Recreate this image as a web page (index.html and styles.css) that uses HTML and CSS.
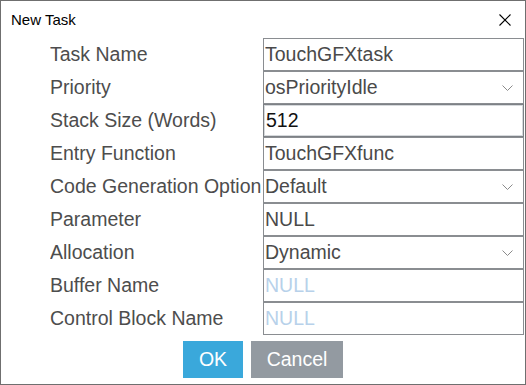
FILE: index.html
```html
<!DOCTYPE html>
<html lang="en">
<head>
    <meta charset="UTF-8">
    <title>New Task</title>
    <link rel="stylesheet" href="styles.css">
</head>
<body>
    <div class="window">
        <div class="titlebar">
            <span class="title">New Task</span>
            <svg class="close" width="12" height="12" viewBox="0 0 12 12">
                <path d="M0.5 0.5 L11.5 11.5 M11.5 0.5 L0.5 11.5" stroke="#000" stroke-width="1.1" fill="none"/>
            </svg>
        </div>
        <div class="form">
            <div class="label">Task Name</div>
            <div class="field">TouchGFXtask</div>

            <div class="label">Priority</div>
            <div class="field select">osPriorityIdle<svg class="chevron" width="11" height="6" viewBox="0 0 11 6"><path d="M0.5 0.5 L5.5 5.5 L10.5 0.5" stroke="#8a8a8a" fill="none"/></svg></div>

            <div class="label">Stack Size (Words)</div>
            <div class="field edit">512</div>

            <div class="label">Entry Function</div>
            <div class="field">TouchGFXfunc</div>

            <div class="label">Code Generation Option</div>
            <div class="field select">Default<svg class="chevron" width="11" height="6" viewBox="0 0 11 6"><path d="M0.5 0.5 L5.5 5.5 L10.5 0.5" stroke="#8a8a8a" fill="none"/></svg></div>

            <div class="label">Parameter</div>
            <div class="field">NULL</div>

            <div class="label">Allocation</div>
            <div class="field select">Dynamic<svg class="chevron" width="11" height="6" viewBox="0 0 11 6"><path d="M0.5 0.5 L5.5 5.5 L10.5 0.5" stroke="#8a8a8a" fill="none"/></svg></div>

            <div class="label">Buffer Name</div>
            <div class="field placeholder">NULL</div>

            <div class="label">Control Block Name</div>
            <div class="field placeholder">NULL</div>
        </div>
        <div class="buttons">
            <button class="btn ok">OK</button>
            <button class="btn cancel">Cancel</button>
        </div>
    </div>
</body>
</html>
```

FILE: styles.css
```css
body {
    margin: 0;
    padding: 0;
    background-color: #1f2b33;
    font-family: 'Liberation Sans', Arial, sans-serif;
}

.window {
    width: 524px;
    height: 383px;
    background-color: #fff;
    border: 1px solid #6f6f6f;
    display: flex;
    flex-direction: column;
}

.titlebar {
    height: 37px;
    display: flex;
    align-items: center;
    justify-content: space-between;
    padding: 0 14px 0 10px;
}

.title {
    font-size: 15px;
    color: #000;
    margin-top: -1px;
}

.close {
    margin-top: 1px;
}

.form {
    display: grid;
    grid-template-columns: 213px 261px;
    grid-auto-rows: 33px;
    padding-left: 49px;
}

.label {
    font-size: 19.5px;
    color: #4d4d4d;
    line-height: 32px;
    white-space: nowrap;
    overflow: hidden;
}

.field {
    position: relative;
    border: 1px solid #8a8d91;
    box-sizing: border-box;
    font-size: 19.5px;
    color: #4a4a4a;
    line-height: 30px;
    padding-left: 1px;
    white-space: nowrap;
}

.field.edit {
    color: #111;
    border-color: #7d8186;
    box-shadow: inset 0 0 0 1px #d6d9dc;
    padding-left: 2px;
}

.field.placeholder {
    color: #b7d1ea;
}

.chevron {
    position: absolute;
    right: 10px;
    top: 13px;
}

.buttons {
    display: flex;
    justify-content: center;
    gap: 8px;
    margin-top: 6px;
}

.btn {
    height: 37px;
    border: none;
    color: #fff;
    font-family: 'Liberation Sans', Arial, sans-serif;
    font-size: 19.5px;
    padding: 0;
}

.ok {
    width: 60px;
    background-color: #3aa8db;
}

.cancel {
    width: 92px;
    background-color: #939aa1;
}
```
